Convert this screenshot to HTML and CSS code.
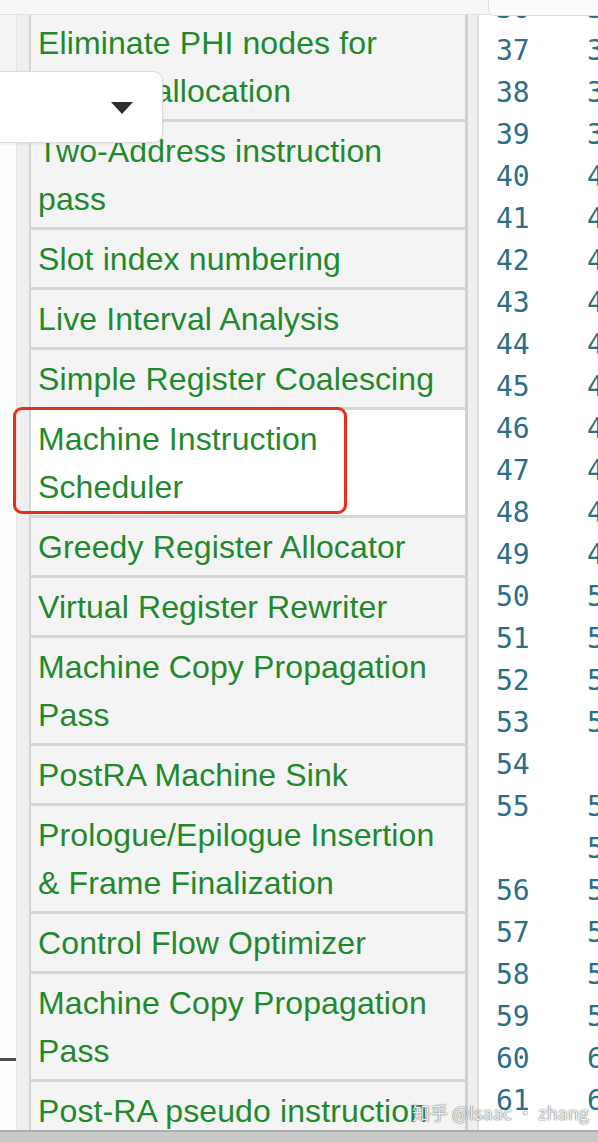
FILE: index.html
```html
<!DOCTYPE html>
<html>
<head>
<meta charset="utf-8">
<link rel="stylesheet" href="styles.css">
</head>
<body>
<div class="topbar"><div class="tab"></div></div>
<div class="main">
  <div class="side">
    <div class="side-top"></div>
    <div class="side-rule"></div>
  </div>
  <div class="gutter"></div>
  <div class="passes">
    <div class="row">Eliminate PHI nodes for register allocation</div>
    <div class="row">Two-Address instruction pass</div>
    <div class="row">Slot index numbering</div>
    <div class="row">Live Interval Analysis</div>
    <div class="row">Simple Register Coalescing</div>
    <div class="row hl">Machine Instruction Scheduler<div class="mark"></div></div>
    <div class="row">Greedy Register Allocator</div>
    <div class="row">Virtual Register Rewriter</div>
    <div class="row">Machine Copy Propagation Pass</div>
    <div class="row">PostRA Machine Sink</div>
    <div class="row">Prologue/Epilogue Insertion &amp; Frame Finalization</div>
    <div class="row">Control Flow Optimizer</div>
    <div class="row">Machine Copy Propagation Pass</div>
    <div class="row">Post-RA pseudo instruction expansion pass</div>
  </div>
  <div class="gutter2"></div>
  <div class="code">
    <div class="line"><span class="ln">36</span><span class="src">36</span></div>
    <div class="line"><span class="ln">37</span><span class="src">37</span></div>
    <div class="line"><span class="ln">38</span><span class="src">38</span></div>
    <div class="line"><span class="ln">39</span><span class="src">39</span></div>
    <div class="line"><span class="ln">40</span><span class="src">40</span></div>
    <div class="line"><span class="ln">41</span><span class="src">41</span></div>
    <div class="line"><span class="ln">42</span><span class="src">42</span></div>
    <div class="line"><span class="ln">43</span><span class="src">43</span></div>
    <div class="line"><span class="ln">44</span><span class="src">44</span></div>
    <div class="line"><span class="ln">45</span><span class="src">45</span></div>
    <div class="line"><span class="ln">46</span><span class="src">46</span></div>
    <div class="line"><span class="ln">47</span><span class="src">47</span></div>
    <div class="line"><span class="ln">48</span><span class="src">48</span></div>
    <div class="line"><span class="ln">49</span><span class="src">49</span></div>
    <div class="line"><span class="ln">50</span><span class="src">50</span></div>
    <div class="line"><span class="ln">51</span><span class="src">51</span></div>
    <div class="line"><span class="ln">52</span><span class="src">52</span></div>
    <div class="line"><span class="ln">53</span><span class="src">53</span></div>
    <div class="line"><span class="ln">54</span><span class="src"></span></div>
    <div class="line"><span class="ln">55</span><span class="src">54</span></div>
    <div class="line"><span class="ln"></span><span class="src">55</span></div>
    <div class="line"><span class="ln">56</span><span class="src">56</span></div>
    <div class="line"><span class="ln">57</span><span class="src">57</span></div>
    <div class="line"><span class="ln">58</span><span class="src">58</span></div>
    <div class="line"><span class="ln">59</span><span class="src">59</span></div>
    <div class="line"><span class="ln">60</span><span class="src">60</span></div>
    <div class="line"><span class="ln">61</span><span class="src">61</span></div>
    <div class="line"><span class="ln">62</span><span class="src">62</span></div>
  </div>
</div>
<div class="bottombar"></div>
<div class="select"><span class="caret"></span></div>
<div class="watermark">知乎 @Isaac · zhang</div>
</body>
</html>
```

FILE: styles.css
```css
html, body {
  margin: 0;
  padding: 0;
}
body {
  width: 598px;
  height: 1142px;
  overflow: hidden;
  display: flex;
  flex-direction: column;
  position: relative;
  background: #ffffff;
  font-family: "Liberation Sans", Arial, sans-serif;
}
.topbar {
  position: absolute;
  top: 0;
  left: 0;
  right: 0;
  height: 14px;
  background: #f7f7f7;
  border-bottom: 1px solid #e2e2e2;
  z-index: 3;
}
.tab {
  position: absolute;
  left: 488px;
  right: -10px;
  top: -10px;
  height: 24px;
  background: #fbfbfb;
  border: 1px solid #dedede;
  border-radius: 7px;
}
.main {
  flex: 1;
  display: flex;
  overflow: hidden;
  min-height: 0;
}
.side {
  width: 16px;
  flex: none;
  border-right: 1px solid #e4e4e4;
  background: #fdfdfd;
  display: flex;
  flex-direction: column;
}
.side-top {
  height: 71px;
  background: #f4f4f4;
}
.side-rule {
  margin-top: 987px;
  height: 3px;
  background: #4d4d4d;
}
.gutter {
  width: 12px;
  flex: none;
  background: #efefef;
}
.passes {
  width: 434px;
  flex: none;
  border-left: 2px solid #d5d5d5;
  border-right: 3px solid #d0d0d0;
  padding-top: 11px;
  background: #f4f4f4;
}
.row {
  border-top: 3px solid #d7d7d7;
  padding: 5px 17px 4px 7px;
  font-size: 32px;
  line-height: 48px;
  letter-spacing: 0.12px;
  color: #1f8a2d;
  background: #f4f4f4;
}
.row.hl {
  background: #ffffff;
  position: relative;
}
.mark {
  position: absolute;
  left: -18px;
  top: -3px;
  width: 334px;
  height: 107px;
  box-sizing: border-box;
  border: 3.5px solid #ea2e1c;
  border-radius: 9px;
}
.gutter2 {
  width: 9px;
  flex: none;
  background: #efefef;
  border-right: 2px solid #dfdfdf;
}
.code {
  flex: 1;
  background: #ffffff;
  margin-top: -12px;
  padding-left: 17px;
  font-family: "DejaVu Sans Mono", "Liberation Mono", monospace;
  font-size: 28px;
  line-height: 42px;
  color: #2c6f87;
  white-space: nowrap;
}
.line {
  display: flex;
  height: 42px;
}
.ln {
  width: 91px;
  flex: none;
}
.bottombar {
  height: 10px;
  flex: none;
  border-top: 2px solid #adadad;
  background: #c9c9c9;
}
.select {
  position: absolute;
  left: -12px;
  top: 71px;
  width: 175px;
  height: 72px;
  box-sizing: border-box;
  background: #ffffff;
  border: 1px solid #dcdcdc;
  border-radius: 10px;
  box-shadow: 0 1px 3px rgba(0, 0, 0, 0.08);
  z-index: 4;
}
.caret {
  position: absolute;
  left: 122px;
  top: 30px;
  width: 0;
  height: 0;
  border-left: 11px solid transparent;
  border-right: 11px solid transparent;
  border-top: 12px solid #2f2f33;
}
.watermark {
  position: absolute;
  left: 412px;
  top: 1097px;
  font-family: "Noto Sans CJK SC", "Liberation Sans", sans-serif;
  font-size: 18px;
  line-height: 30px;
  color: rgba(255, 255, 255, 0.92);
  text-shadow: 0 0 1px rgba(0, 0, 0, 0.6), 0 0 2px rgba(0, 0, 0, 0.4);
  white-space: nowrap;
  z-index: 5;
}
```
